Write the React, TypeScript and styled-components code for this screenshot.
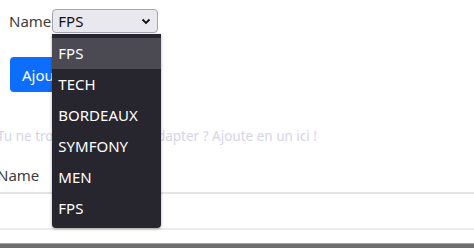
import styled, { createGlobalStyle } from "styled-components";

const GlobalStyle = createGlobalStyle`
  html, body {
    margin: 0;
    padding: 0;
    background: #ffffff;
    font-family: "Noto Sans", "Open Sans", sans-serif;
    color: #3a3a3a;
    overflow: hidden;
  }
`;

const options = ["FPS", "TECH", "BORDEAUX", "SYMFONY", "MEN", "FPS"];

const App = () => {
  return (
    <>
      <GlobalStyle />
      <Page>
        <FormRow>
          <Label htmlFor="tag">Name</Label>
          <SelectWrap>
            <FakeSelect id="tag">
              <span>FPS</span>
              <Chevron viewBox="0 0 12 12">
                <path d="M2.5 4.5 L6 8 L9.5 4.5" />
              </Chevron>
            </FakeSelect>
            <Listbox>
              {options.map((o, i) => (
                <Option key={i} $active={i === 0}>
                  {o}
                </Option>
              ))}
            </Listbox>
          </SelectWrap>
        </FormRow>
        <AddButton>Ajouter</AddButton>
        <Hint>Tu ne trouve pas de tag adapter ? Ajoute en un ici !</Hint>
        <Table>
          <HeadCell>Name</HeadCell>
          <Row />
        </Table>
      </Page>
      <BottomBar />
    </>
  );
};

export default App;

const Page = styled.div`
  height: 243px;
  box-sizing: border-box;
  padding-top: 9px;
`;

const FormRow = styled.div`
  display: flex;
  align-items: center;
  padding-left: 9px;
  height: 24px;
`;

const Label = styled.label`
  font-size: 15px;
  color: #3d3d3d;
  margin-right: 1px;
`;

const SelectWrap = styled.div`
  position: relative;
`;

const FakeSelect = styled.div`
  width: 106px;
  height: 24px;
  box-sizing: border-box;
  display: flex;
  align-items: center;
  justify-content: space-between;
  padding: 0 5px 0 5px;
  background: #e9e8ee;
  border: 1px solid #a5a5b0;
  border-radius: 4px;
  font-size: 15px;
  color: #111;
`;

const Chevron = styled.svg`
  width: 12px;
  height: 12px;
  fill: none;
  stroke: #111;
  stroke-width: 1.8;
`;

const Listbox = styled.ul`
  position: absolute;
  top: 25px;
  left: 0;
  width: 109px;
  height: 194px;
  margin: 0;
  padding: 4px 0 0;
  box-sizing: border-box;
  list-style: none;
  background: #27262e;
  border-radius: 0 0 4px 4px;
  box-shadow: 0 1px 3px rgba(0, 0, 0, 0.35);
  z-index: 2;
`;

const Option = styled.li<{ $active?: boolean }>`
  height: 31px;
  line-height: 31px;
  padding-left: 6px;
  font-size: 15px;
  color: #ffffff;
  background: ${(p) => (p.$active ? "#4b4a53" : "transparent")};
`;

const AddButton = styled.button`
  display: block;
  margin: 24px 0 0 10px;
  height: 35px;
  padding: 0 12px;
  border: none;
  border-radius: 4px;
  background: #0d6efd;
  color: #ffffff;
  font-family: inherit;
  font-size: 15px;
`;

const Hint = styled.p`
  margin: 35px 0 0 -3px;
  font-size: 13.5px;
  color: #d6d4e8;
`;

const Table = styled.div`
  margin-top: 20px;
`;

const HeadCell = styled.div`
  font-size: 15px;
  color: #3d3d3d;
  margin-left: -3px;
  height: 23px;
  padding-bottom: 4px;
  border-bottom: 2px solid #e3e3e3;
`;

const Row = styled.div`
  height: 34px;
  border-bottom: 2px solid #ececec;
`;

const BottomBar = styled.div`
  height: 4px;
  background: #6e6e6e;
  border-top: 1px solid #a8a8a8;
`;
